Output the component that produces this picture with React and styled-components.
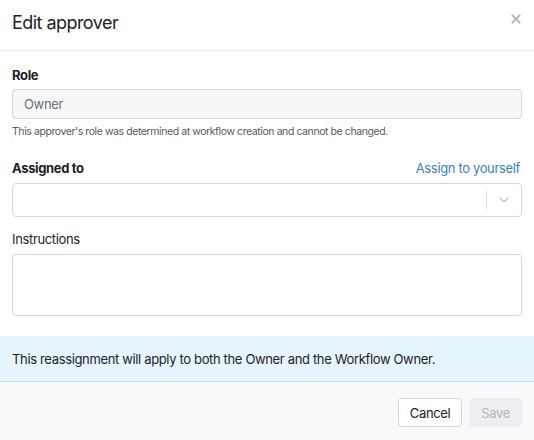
import React from "react";
import styled, { createGlobalStyle } from "styled-components";

const Global = createGlobalStyle`
  html, body { margin: 0; padding: 0; background: #ffffff; }
  body { font-family: Inter, "Noto Sans", "Liberation Sans", sans-serif; color: #1d2228; -webkit-font-smoothing: antialiased; letter-spacing: -0.35px; }
  * { box-sizing: border-box; }
`;

const Modal = styled.div`
  width: 534px;
  height: 440px;
  display: flex;
  flex-direction: column;
  background: #fff;
  overflow: hidden;
`;

const Header = styled.div`
  height: 51px;
  flex: none;
  display: flex;
  align-items: center;
  justify-content: space-between;
  padding: 0 12px 5px 12px;
  border-bottom: 1px solid #e4e6e9;
`;

const Title = styled.h2`
  margin: 0;
  font-size: 18px;
  font-weight: 400;
  color: #1d2228;
  letter-spacing: -0.55px;
`;

const Close = styled.button`
  border: 0;
  background: none;
  padding: 0;
  width: 12px;
  height: 12px;
  display: flex;
  align-items: center;
  justify-content: center;
  margin-top: -8px;
  cursor: pointer;
`;

const Body = styled.div`
  padding: 16px 12px 0 12px;
  display: flex;
  flex-direction: column;
`;

const Field = styled.div`
  display: flex;
  flex-direction: column;
  margin-top: ${(p) => p.$mt || 0}px;
`;

const LabelRow = styled.div`
  display: flex;
  justify-content: space-between;
  align-items: baseline;
  margin-bottom: ${(p) => p.$mb || 6}px;
`;

const Label = styled.label`
  font-size: 13px;
  line-height: 16px;
  font-weight: ${(p) => (p.$bold ? 700 : 400)};
  color: #1d2228;
`;

const Link = styled.a`
  font-size: 13px;
  line-height: 16px;
  color: #3a82c6;
  text-decoration: none;
  margin-right: 2px;
  cursor: pointer;
`;

const TextInput = styled.div`
  height: 30px;
  border: 1px solid #d4d7dc;
  border-radius: 4px;
  background: #f6f7f9;
  display: flex;
  align-items: center;
  padding: 0 11px;
  font-size: 13px;
  color: #6b7078;
`;

const Help = styled.p`
  margin: 6px 0 0;
  font-size: 10.5px;
  line-height: 14px;
  letter-spacing: -0.42px;
  color: #555a61;
`;

const Select = styled.div`
  height: 34px;
  border: 1px solid #d4d7dc;
  border-radius: 4px;
  background: #fff;
  display: flex;
  align-items: center;
  justify-content: flex-end;
`;

const Separator = styled.span`
  width: 1px;
  height: 18px;
  background: #d8dadf;
`;

const Indicator = styled.span`
  width: 34px;
  display: flex;
  align-items: center;
  justify-content: center;
`;

const TextArea = styled.textarea`
  height: 62px;
  border: 1px solid #d4d7dc;
  border-radius: 4px;
  background: #fff;
  resize: none;
  font: inherit;
  font-size: 13px;
  padding: 8px 11px;
  outline: none;
`;

const Banner = styled.div`
  margin-top: 20px;
  height: 46px;
  flex: none;
  background: #e6f4fd;
  border-bottom: 1px solid #d3dbe2;
  display: flex;
  align-items: center;
  padding: 0 12px;
  font-size: 13px;
  color: #1d2228;
`;

const Footer = styled.div`
  flex: 1;
  background: #f8f9fb;
  display: flex;
  justify-content: flex-end;
  align-items: flex-start;
  gap: 7px;
  padding: 16px 12px 0;
`;

const Button = styled.button`
  height: 29px;
  padding: 0 11px;
  border-radius: 4px;
  font-family: inherit;
  letter-spacing: inherit;
  font-size: 13px;
  border: 1px solid ${(p) => (p.$disabled ? "#eceef1" : "#d4d7dc")};
  background: ${(p) => (p.$disabled ? "#eceef1" : "#ffffff")};
  color: ${(p) => (p.$disabled ? "#b3b7bd" : "#1d2228")};
  cursor: ${(p) => (p.$disabled ? "default" : "pointer")};
`;

export default function App() {
  return (
    <>
      <Global />
      <Modal>
        <Header>
          <Title>Edit approver</Title>
          <Close aria-label="Close">
            <svg width="10" height="10" viewBox="0 0 10 10">
              <path d="M1.5 1.5 L8.5 8.5 M8.5 1.5 L1.5 8.5" stroke="#b5b8bd" strokeWidth="2" strokeLinecap="square" />
            </svg>
          </Close>
        </Header>
        <Body>
          <Field>
            <LabelRow>
              <Label $bold>Role</Label>
            </LabelRow>
            <TextInput>Owner</TextInput>
            <Help>This approver's role was determined at workflow creation and cannot be changed.</Help>
          </Field>
          <Field $mt={21}>
            <LabelRow $mb={7}>
              <Label $bold>Assigned to</Label>
              <Link>Assign to yourself</Link>
            </LabelRow>
            <Select>
              <Separator />
              <Indicator>
                <svg width="12" height="8" viewBox="0 0 12 8">
                  <path d="M1.5 1.8 L6 5.8 L10.5 1.8" stroke="#c9ccd1" strokeWidth="1.6" fill="none" />
                </svg>
              </Indicator>
            </Select>
          </Field>
          <Field $mt={14}>
            <LabelRow $mb={7}>
              <Label>Instructions</Label>
            </LabelRow>
            <TextArea />
          </Field>
        </Body>
        <Banner>This reassignment will apply to both the Owner and the Workflow Owner.</Banner>
        <Footer>
          <Button>Cancel</Button>
          <Button $disabled>Save</Button>
        </Footer>
      </Modal>
    </>
  );
}
